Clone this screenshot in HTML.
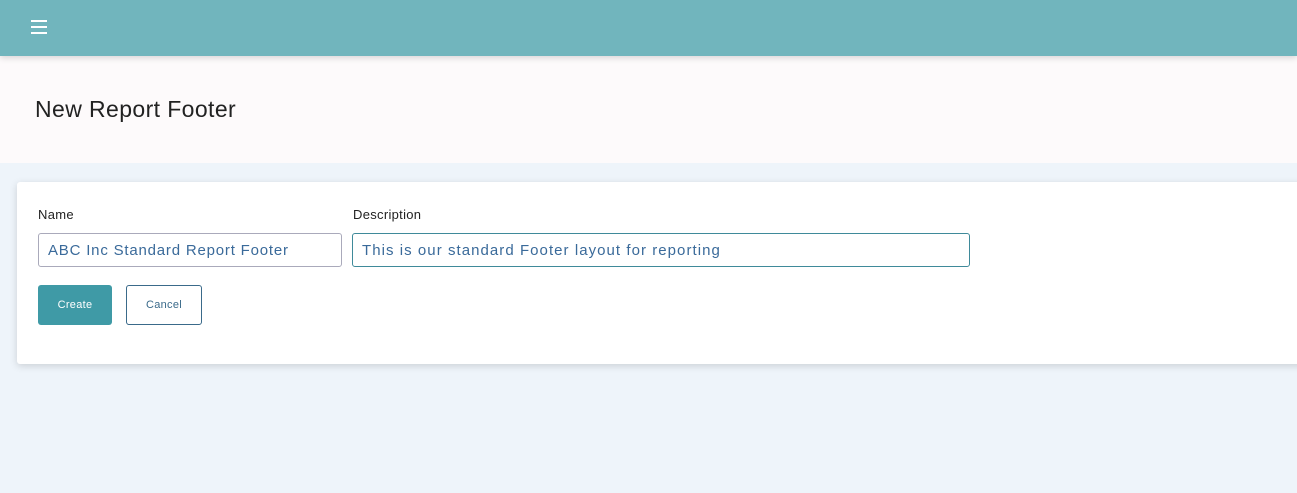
<!DOCTYPE html>
<html><head><style>
*{box-sizing:border-box;margin:0;padding:0}
body{width:1297px;height:493px;overflow:hidden;background:#eef4fa;font-family:"Liberation Sans",sans-serif;position:relative}
.top{position:absolute;left:0;top:0;width:1297px;height:56px;background:#71b5bd;box-shadow:0 2px 6px rgba(0,0,0,.15);z-index:2}
.burger{position:absolute;left:31px;top:20px;width:16px}
.burger i{display:block;height:2px;background:#fff;margin-bottom:4px}
.head{position:absolute;left:0;top:56px;width:1297px;height:107px;background:#fdfafb}
.head h1{position:absolute;left:35px;top:40px;font-weight:normal;font-size:23px;letter-spacing:.4px;color:#222}
.card{position:absolute;left:17px;top:182px;width:1290px;height:182px;background:#fff;border-radius:3px;box-shadow:0 2px 8px rgba(0,0,0,.15)}
label{position:absolute;font-size:13px;color:#222;letter-spacing:.3px}
.in{position:absolute;height:34px;border:1px solid #aab;border-radius:3px;font-size:15px;color:#3a6a9a;padding:8px 9px;letter-spacing:.8px;white-space:nowrap}
.btn{position:absolute;top:103px;height:40px;border-radius:3px;font-size:11px;text-align:center;line-height:40px;letter-spacing:.3px}
</style></head><body>
<div class="top"><div class="burger"><i></i><i></i><i></i></div></div>
<div class="head"><h1>New Report Footer</h1></div>
<div class="card">
<label style="left:21px;top:25px">Name</label>
<label style="left:336px;top:25px">Description</label>
<div class="in" style="left:21px;top:51px;width:304px">ABC Inc Standard Report Footer</div>
<div class="in" style="left:335px;top:51px;width:618px;border-color:#3f8a9a;letter-spacing:1.05px">This is our standard Footer layout for reporting</div>
<div class="btn" style="left:21px;width:74px;background:#3f9aa6;color:#fff">Create</div>
<div class="btn" style="left:109px;width:76px;border:1px solid #3a6a8a;color:#3a6a8a;line-height:38px">Cancel</div>
</div>
</body></html>
